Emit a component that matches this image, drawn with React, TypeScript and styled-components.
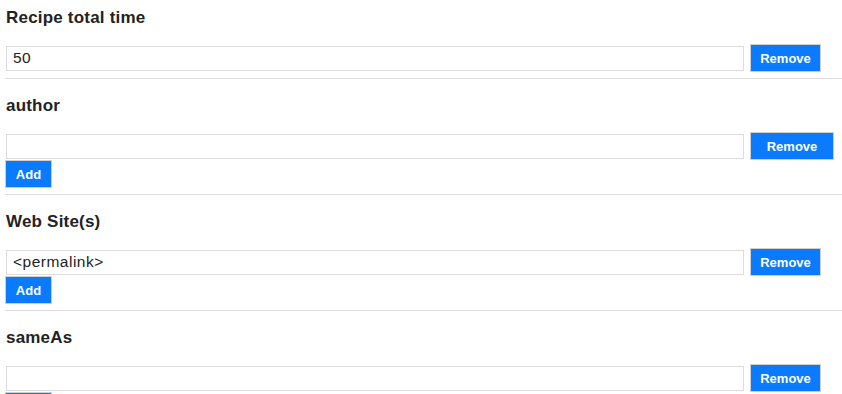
import React from "react";
import styled, { createGlobalStyle } from "styled-components";

const Global = createGlobalStyle`
  html, body { margin: 0; padding: 0; background: #fff; }
  body { font-family: "Liberation Sans", Arial, sans-serif; color: #212529; }
  * { box-sizing: border-box; }
`;

const Page = styled.div`
  padding: 8px 0 0 5px;
  width: 842px;
`;

const Section = styled.section<{ $first?: boolean }>`
  border-top: ${(p) => (p.$first ? "none" : "1px solid #dddddd")};
  padding-bottom: 6px;
`;

const Heading = styled.h3<{ $first?: boolean }>`
  margin: ${(p) => (p.$first ? "0" : "17px")} 0 16px 1px;
  font-size: 17px;
  letter-spacing: 0.2px;
  line-height: 20px;
  font-weight: bold;
  color: #222;
`;

const Row = styled.div`
  display: flex;
  align-items: center;
  gap: 6px;
  height: 28px;
`;

const Input = styled.input`
  width: 738px;
  height: 25px;
  margin-left: 1px;
  border: 1px solid #dcdcdc;
  border-radius: 0;
  padding: 0 6px;
  font-family: "Liberation Sans", Arial, sans-serif;
  font-size: 15.5px;
  letter-spacing: 0.5px;
  color: #222;
  outline: none;
`;

const Button = styled.button<{ $w: number; $h?: number }>`
  width: ${(p) => p.$w}px;
  height: ${(p) => p.$h ?? 28}px;
  background: #0a7bff;
  color: #fff;
  border: 1px solid #cfcfcf;
  border-radius: 0;
  font-family: "Liberation Sans", Arial, sans-serif;
  font-size: 13px;
  font-weight: bold;
  padding: 0;
  display: block;
`;

const AddButton = styled(Button)`
  margin-top: 0;
`;

type Field = { label: string; value: string; removeW: number; add: boolean };

const fields: Field[] = [
  { label: "Recipe total time", value: "50", removeW: 71, add: false },
  { label: "author", value: "", removeW: 84, add: true },
  { label: "Web Site(s)", value: "<permalink>", removeW: 71, add: true },
  { label: "sameAs", value: "", removeW: 71, add: true },
];

export default function App() {
  return (
    <>
      <Global />
      <Page>
        {fields.map((f, i) => (
          <Section key={f.label} $first={i === 0}>
            <Heading $first={i === 0}>{f.label}</Heading>
            <Row>
              <Input defaultValue={f.value} />
              <Button $w={f.removeW}>Remove</Button>
            </Row>
            {f.add && (
              <AddButton $w={47} $h={28}>
                Add
              </AddButton>
            )}
          </Section>
        ))}
      </Page>
    </>
  );
}
